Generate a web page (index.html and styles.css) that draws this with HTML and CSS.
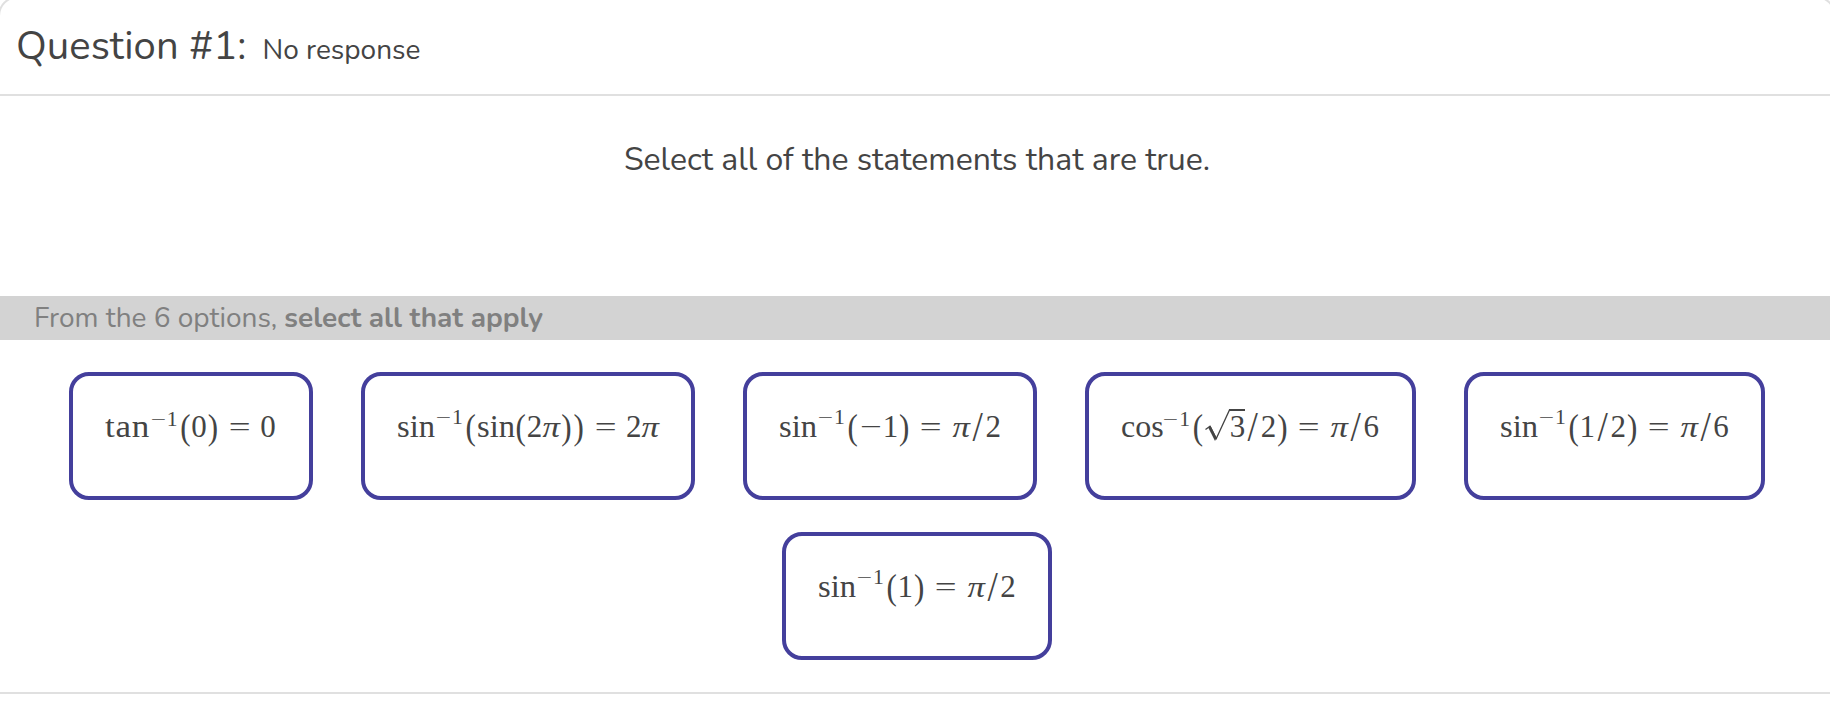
FILE: index.html
```html
<!DOCTYPE html>
<html lang="en">

<head>
    <meta charset="UTF-8">
    <meta name="viewport" content="width=device-width, initial-scale=1.0">
    <title>Question #1</title>
    <link rel="stylesheet" href="styles.css">
</head>

<body>
    <div class="question-card">
        <div class="question-header">
            <h1 class="question-title">Question #1:</h1>
            <span class="question-status">No response</span>
        </div>

        <p class="prompt">Select all of the statements that are true.</p>

        <div class="instructions">
            <p>From the 6 options, <strong>select all that apply</strong></p>
        </div>

        <div class="options">
            <div class="option option-tan">
                <span class="math"><span class="fn tan">tan</span><span class="sup low"><i class="minus">−</i>1</span><span class="paren">(</span>0<span class="paren">)</span><span class="rel">=</span>0</span>
            </div>
            <div class="option option-sin-sin">
                <span class="math"><span class="fn sin">sin</span><span class="sup"><i class="minus">−</i>1</span><span class="paren">(</span><span class="fn sin">sin</span><span class="paren">(</span>2<span class="pi">π</span><span class="paren">)</span><span class="paren">)</span><span class="rel">=</span>2<span class="pi">π</span></span>
            </div>
            <div class="option option-sin-neg">
                <span class="math"><span class="fn sin">sin</span><span class="sup"><i class="minus">−</i>1</span><span class="paren">(</span><i class="minus">−</i>1<span class="paren">)</span><span class="rel">=</span><span class="pi">π</span><span class="slash">/</span>2</span>
            </div>
            <div class="option option-cos">
                <span class="math"><span class="fn cos">cos</span><span class="sup low"><i class="minus">−</i>1</span><span class="paren">(</span><span class="sqrt"><svg class="radical" viewBox="0 0 41 33"><path d="M1.5 20.5 L6 17.3 L12.3 29.5 L25.5 1 H41" fill="none" stroke="currentColor" stroke-width="1.3"/><path d="M4.2 18.4 L6.6 17 L12.6 29 L11 32 Z" fill="currentColor"/><path d="M25 0 H41 V2 H25 Z" fill="currentColor"/></svg>3</span><span class="slash">/</span>2<span class="paren">)</span><span class="rel">=</span><span class="pi">π</span><span class="slash">/</span>6</span>
            </div>
            <div class="option option-sin-half">
                <span class="math"><span class="fn sin">sin</span><span class="sup"><i class="minus">−</i>1</span><span class="paren">(</span>1<span class="slash">/</span>2<span class="paren">)</span><span class="rel">=</span><span class="pi">π</span><span class="slash">/</span>6</span>
            </div>
            <div class="option option-sin-one">
                <span class="math"><span class="fn sin">sin</span><span class="sup"><i class="minus">−</i>1</span><span class="paren">(</span>1<span class="paren">)</span><span class="rel">=</span><span class="pi">π</span><span class="slash">/</span>2</span>
            </div>
        </div>
    </div>
</body>

</html>
```
FILE: styles.css
```css
* {
    margin: 0;
    padding: 0;
    box-sizing: border-box;
}

body {
    font-family: Nunito, Lato, sans-serif;
    background: #fff;
    color: #444;
    height: 712px;
    overflow: hidden;
}

.question-card {
    width: 1838px;
    height: 740px;
    margin: -4px 0 0 -2px;
    border: 2px solid #e0e0e0;
    border-radius: 20px;
}

.question-header {
    display: flex;
    align-items: baseline;
    gap: 16px;
    height: 98px;
    padding: 22px 16px 0;
    border-bottom: 2px solid #e0e0e0;
}

.question-title {
    font-size: 40px;
    font-weight: 430;
    line-height: 52px;
    letter-spacing: 0.1px;
}

.question-status {
    font-size: 28px;
}

.prompt {
    height: 200px;
    padding-top: 42px;
    font-size: 32px;
    line-height: 44px;
    text-align: center;
}

.instructions {
    height: 44px;
    padding-left: 34px;
    background: #d3d3d3;
    color: #808080;
    font-size: 28px;
    line-height: 44px;
}

.options {
    display: flex;
    flex-wrap: wrap;
    justify-content: center;
    gap: 32px 48px;
    padding: 32px 48px;
    border-bottom: 2px solid #e0e0e0;
}

.option {
    height: 128px;
    padding: 31px 0 0 32px;
    border: 4px solid #443f9c;
    border-radius: 20px;
}

.option-tan {
    width: 244px;
}

.option-sin-sin {
    width: 334px;
}

.option-sin-neg {
    width: 294px;
}

.option-cos {
    width: 331px;
}

.option-sin-half {
    width: 301px;
}

.option-sin-one {
    width: 270px;
}

/* Math */
.math {
    display: block;
    font-family: "KaTeX_Main", "Liberation Serif", serif;
    font-size: 31px;
    line-height: 40px;
    white-space: nowrap;
}

.fn,
.minus,
.paren,
.rel,
.pi,
.slash {
    display: inline-block;
    font-style: normal;
    text-align: center;
}

.fn {
    text-align: left;
    transform-origin: left;
}

.sin {
    width: 1.228em;
    transform: scaleX(1.05);
}

.tan {
    width: 1.445em;
    letter-spacing: 0.02em;
    transform: scaleX(1.13);
}

.cos {
    width: 1.338em;
    transform: scaleX(1.03);
}

.sup {
    display: inline-block;
    width: 1.36em;
    font-size: 0.7em;
    line-height: 1;
    vertical-align: 0.62em;
}

.sup.low {
    vertical-align: 0.52em;
}

.minus {
    width: 0.778em;
    transform: scale(1.25, 0.8);
}

.paren {
    width: 0.389em;
    transform: scale(1, 1.15);
}

.rel {
    width: 1.334em;
    transform: scale(1.25, 0.9);
}

.pi {
    width: 0.59em;
    font-style: italic;
    transform: scale(1.12, 0.98);
}

.slash {
    width: 0.5em;
    transform: scale(1.2, 1.38);
}

.sqrt {
    position: relative;
    display: inline-block;
    padding-left: 0.833em;
}

.radical {
    position: absolute;
    left: 0;
    top: 2px;
    width: 41px;
    height: 33px;
}
```
